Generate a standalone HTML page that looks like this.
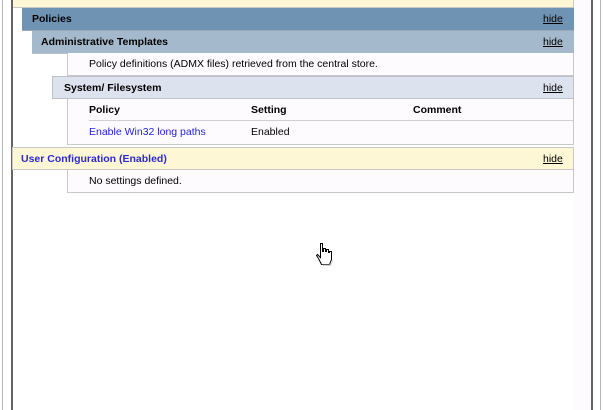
<!DOCTYPE html>
<html><head><meta charset="utf-8"><style>
*{margin:0;padding:0;box-sizing:border-box}
body{width:604px;height:410px;background:#fff;position:relative;overflow:hidden;font-family:"Liberation Sans",Tahoma,sans-serif;font-size:10.5px;color:#000}
.a{position:absolute}
.bar{position:absolute;height:23px;line-height:22px;font-weight:bold}
.hide{position:absolute;color:#000;text-decoration:underline;font-weight:normal}
.row{position:absolute;background:#fefbfe;border-left:1px solid #c8c8c8;border-right:1px solid #c8c8c8;border-bottom:1px solid #c8c8c8;height:23px;line-height:22px}
</style></head><body>
<div class="a" style="left:2px;top:0;width:1px;height:410px;background:#b8b4bc"></div>
<div class="a" style="left:11px;top:0;width:2px;height:410px;background:#646464"></div>
<div class="a" style="left:574px;top:0;width:17px;height:410px;background:#fefbfe"></div>
<div class="a" style="left:591px;top:0;width:2px;height:410px;background:#646464"></div>
<div class="a" style="left:600px;top:0;width:1px;height:410px;background:#b8b4bc"></div>

<div class="a" style="left:13px;top:0;width:561px;height:8px;background:#fef7d6;border-bottom:1px solid #c8c8c8;border-right:1px solid #c8c8c8;overflow:hidden">
<div class="a" style="left:8px;top:-12px;color:#2a2ad0;font-weight:bold;line-height:14px">Computer Configuration (Enabled)</div>
<div class="a" style="left:530px;top:-12px;line-height:14px;text-decoration:underline">hide</div>
</div>

<div class="bar" style="left:22px;top:8px;width:552px;background:#6f93b3;border-bottom:1px solid #9aa8b8"><span class="a" style="left:10px">Policies</span><span class="hide" style="left:521px">hide</span></div>
<div class="bar" style="left:32px;top:31px;width:542px;background:#a4b9cc;border-bottom:1px solid #b8c2cc"><span class="a" style="left:9px">Administrative Templates</span><span class="hide" style="left:511px">hide</span></div>
<div class="row" style="left:67px;top:53px;width:507px"><span class="a" style="left:21px">Policy definitions (ADMX files) retrieved from the central store.</span></div>
<div class="bar" style="left:52px;top:76px;width:522px;background:#dde3ee;border:1px solid #c0c0c8"><span class="a" style="left:11px">System/ Filesystem</span><span class="hide" style="left:490px">hide</span></div>
<div class="row" style="left:67px;top:99px;width:507px;height:46px">
<div class="a" style="left:21px;top:0;font-weight:bold">Policy</div>
<div class="a" style="left:183px;top:0;font-weight:bold">Setting</div>
<div class="a" style="left:345px;top:0;font-weight:bold">Comment</div>
<div class="a" style="left:21px;top:21px;width:484px;height:1px;background:#d0d0d0"></div>
<div class="a" style="left:21px;top:22px;color:#1f1fe0">Enable Win32 long paths</div>
<div class="a" style="left:183px;top:22px">Enabled</div>
</div>
<div class="bar" style="left:12px;top:147px;width:562px;background:#fef7d6;border:1px solid #c8c8c8"><span class="a" style="left:8px;color:#2a2ad0">User Configuration (Enabled)</span><span class="hide" style="left:530px">hide</span></div>
<div class="row" style="left:67px;top:170px;width:507px"><span class="a" style="left:21px">No settings defined.</span></div>

<svg class="a" style="left:314px;top:242px" width="22" height="26" viewBox="0 0 22 26">
<path d="M6 1h2v8h1V6h2v3h1V7h2v3h1V9h2v8l-2 5H7L4 16 2 13l1-1 3 3z" fill="#fff" stroke="#000" stroke-width="1" transform="translate(0.5 0.5)"/>
<path d="M8 22h9l2-5v2l-2 5H9z" fill="#aaa" opacity=".5"/>
</svg>
</body></html>
